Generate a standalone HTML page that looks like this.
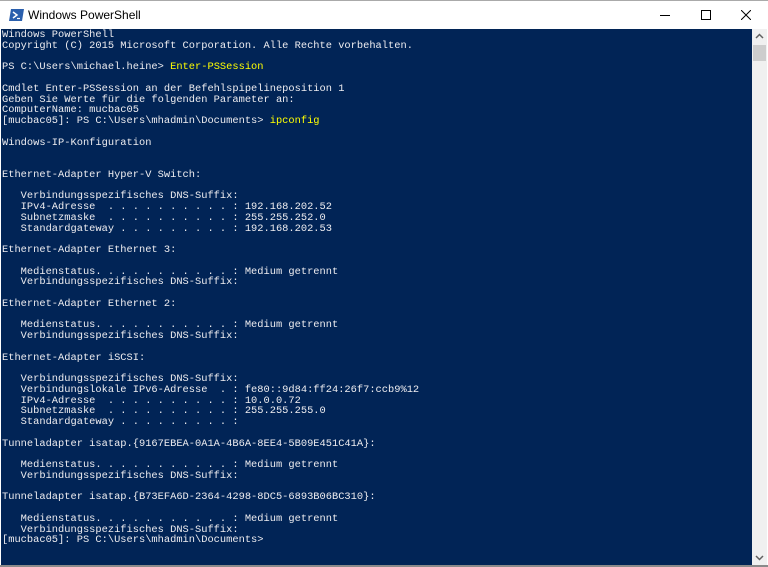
<!DOCTYPE html>
<html><head><meta charset="utf-8"><style>
html,body{margin:0;padding:0;width:768px;height:567px;overflow:hidden;background:#fff;}
.title{position:absolute;left:0;top:0;width:768px;height:29px;background:#fff;border-top:1px solid #aaa;box-sizing:border-box;}
.title .t{position:absolute;left:28px;top:7px;font:12px "Liberation Sans",sans-serif;color:#000;}
.con{position:absolute;left:1px;top:29px;width:751px;height:536px;background:#012456;}
.sb{position:absolute;left:752px;top:29px;width:15px;height:536px;background:#f0f0f0;}
.bot{position:absolute;left:0;top:565px;width:768px;height:2px;background:#8a8a8a;}
pre{position:absolute;left:2px;top:30px;margin:0;font-family:"Liberation Mono",monospace;font-size:10.38px;line-height:10.745px;color:#eeedf0;}
.y{color:#ffff00;}
</style></head><body>
<div class="title">
<svg style="position:absolute;left:9px;top:8px" width="15" height="12" viewBox="0 0 15 12"><polygon points="2,0 15,0 13,12 0,12" fill="#2a5fad"/><path d="M4 3 L8 6 L4 9" stroke="#fff" stroke-width="1.5" fill="none"/><path d="M8 9.5 H11" stroke="#fff" stroke-width="1.2"/></svg>
<span class="t">Windows PowerShell</span>
<svg style="position:absolute;left:660px;top:9px" width="10" height="10"><path d="M0 5.5H10" stroke="#000"/></svg>
<svg style="position:absolute;left:701px;top:9px" width="10" height="10"><rect x="0.5" y="0.5" width="9" height="9" fill="none" stroke="#000"/></svg>
<svg style="position:absolute;left:741px;top:9px" width="10" height="10"><path d="M0 0L10 10M10 0L0 10" stroke="#000"/></svg>
</div>
<div class="con"></div>
<div class="sb">
<svg style="position:absolute;left:3px;top:4px" width="9" height="6"><path d="M1 5L4.5 1.5L8 5" stroke="#606060" stroke-width="1.5" fill="none"/></svg>
<div style="position:absolute;left:1px;top:16px;width:13px;height:16px;background:#cdcdcd"></div>
<svg style="position:absolute;left:3px;top:526px" width="9" height="6"><path d="M1 1L4.5 4.5L8 1" stroke="#606060" stroke-width="1.5" fill="none"/></svg>
</div>
<div class="bot"></div>
<pre>Windows PowerShell
Copyright (C) 2015 Microsoft Corporation. Alle Rechte vorbehalten.

PS C:\Users\michael.heine> <span class="y">Enter-PSSession</span>

Cmdlet Enter-PSSession an der Befehlspipelineposition 1
Geben Sie Werte für die folgenden Parameter an:
ComputerName: mucbac05
[mucbac05]: PS C:\Users\mhadmin\Documents> <span class="y">ipconfig</span>

Windows-IP-Konfiguration


Ethernet-Adapter Hyper-V Switch:

   Verbindungsspezifisches DNS-Suffix:
   IPv4-Adresse  . . . . . . . . . . : 192.168.202.52
   Subnetzmaske  . . . . . . . . . . : 255.255.252.0
   Standardgateway . . . . . . . . . : 192.168.202.53

Ethernet-Adapter Ethernet 3:

   Medienstatus. . . . . . . . . . . : Medium getrennt
   Verbindungsspezifisches DNS-Suffix:

Ethernet-Adapter Ethernet 2:

   Medienstatus. . . . . . . . . . . : Medium getrennt
   Verbindungsspezifisches DNS-Suffix:

Ethernet-Adapter iSCSI:

   Verbindungsspezifisches DNS-Suffix:
   Verbindungslokale IPv6-Adresse  . : fe80::9d84:ff24:26f7:ccb9%12
   IPv4-Adresse  . . . . . . . . . . : 10.0.0.72
   Subnetzmaske  . . . . . . . . . . : 255.255.255.0
   Standardgateway . . . . . . . . . :

Tunneladapter isatap.{9167EBEA-0A1A-4B6A-8EE4-5B09E451C41A}:

   Medienstatus. . . . . . . . . . . : Medium getrennt
   Verbindungsspezifisches DNS-Suffix:

Tunneladapter isatap.{B73EFA6D-2364-4298-8DC5-6893B06BC310}:

   Medienstatus. . . . . . . . . . . : Medium getrennt
   Verbindungsspezifisches DNS-Suffix:
[mucbac05]: PS C:\Users\mhadmin\Documents></pre>
</body></html>
